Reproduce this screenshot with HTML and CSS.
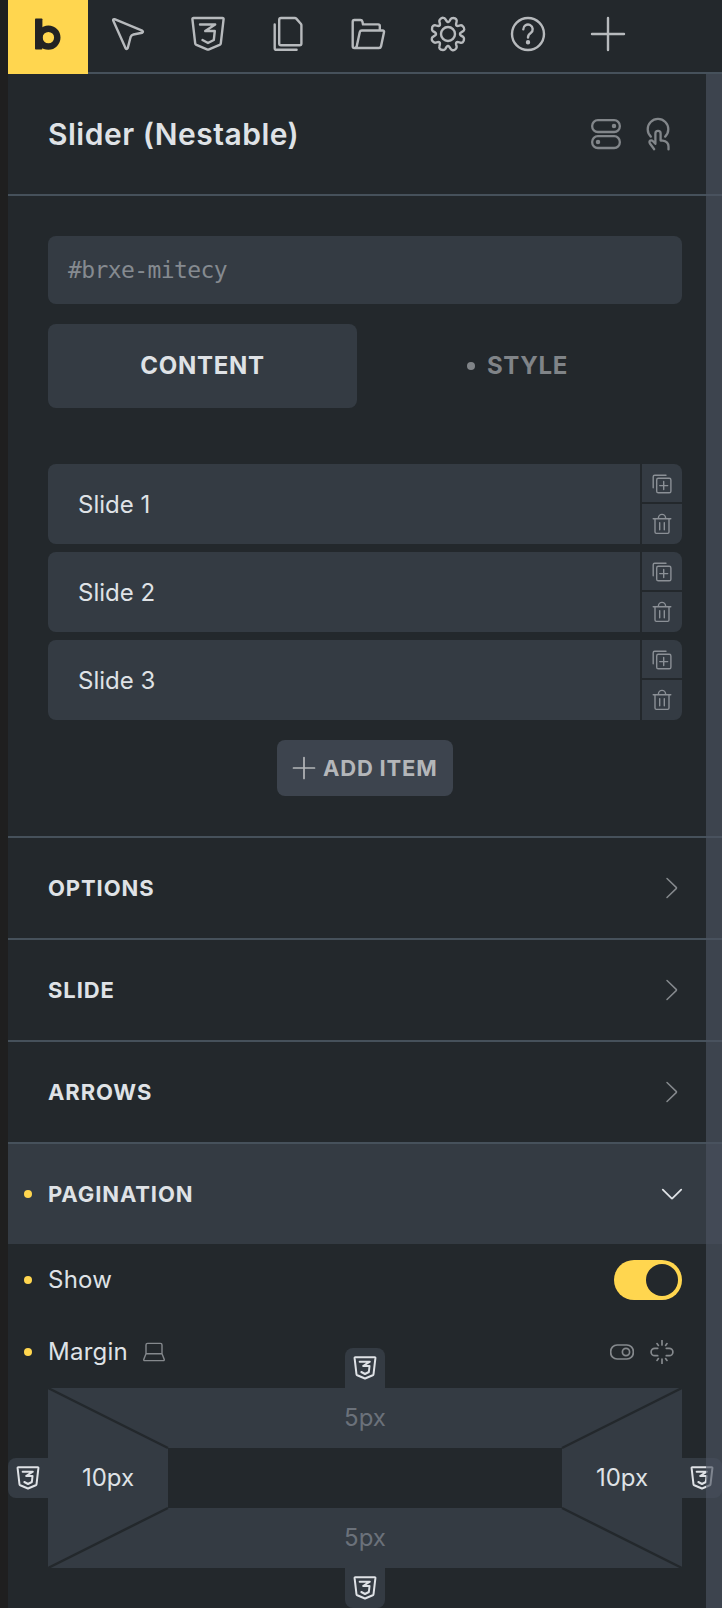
FILE: index.html
```
<!DOCTYPE html>
<html lang="en">
<head>
<meta charset="utf-8">
<title>Slider (Nestable)</title>
<link rel="stylesheet" href="styles.css">
</head>
<body>
<svg class="defs" aria-hidden="true">
  <symbol id="css" viewBox="-18 -18 36 36"><path d="M-15.6-14.8Q-15.7-16-14.5-16H14.5Q15.7-16 15.6-14.8L12.8 9.3Q12.7 10.4 11.6 10.9L1 15.4Q0 15.9-1 15.4L-11.6 10.9Q-12.7 10.4-12.8 9.3Z"/><path d="M-8-9.5H7.2L-2.8-3H6.8L5.8 6 0 9-5.5 6"/></symbol>
  <symbol id="copy" viewBox="-12 -12 24 24"><path d="M-8.8 4.7V-6.2Q-8.8-7.7-7.3-7.7H4"/><rect x="-5.3" y="-4.7" width="14.2" height="14.5" rx="1.6"/><path d="M1.7-1.5v8M-2.3 2.6h8"/></symbol>
  <symbol id="trash" viewBox="-12 -12 24 24"><path d="M-8.8-5.2H8.8M-3.6-5.2V-6A3.6 3.6 0 0 1 3.6-6V-5.2M-7-5V8Q-7 9.4-5.6 9.4H5.6Q7 9.4 7 8V-5M-2.3-1.4V5.8M2.3-1.4V5.8"/></symbol>
  <symbol id="next" viewBox="-12 -12 24 24"><path d="M-5-9.5 4.2-.6Q4.8 0 4.2.6L-5 9.5"/></symbol>
</svg>

<div class="builder">
  <nav class="toolbar">
    <a class="logo"><svg viewBox="0 0 80 74"><rect x="27" y="18.5" width="7.4" height="31" rx=".8"/><circle cx="40.4" cy="37.6" r="8.9"/></svg></a>
    <a class="tool"><svg viewBox="-18 -18 36 36"><path d="M-14.8-13.6Q-15.2-15.2-13.5-14.8L14.2-3.3Q15.7-2.2 14.2-1.2L5.4.5Q3.3 1 2.6 3L-.3 14.2Q-1.3 15.7-2.4 14.2Z"/></svg></a>
    <a class="tool"><svg><use href="#css"/></svg></a>
    <a class="tool"><svg viewBox="-18 -18 36 36"><path d="M-8.8-14.2Q-8.8-16-7-16H6.8Q7.7-16 8.3-15.4L12.8-10.3Q13.4-9.6 13.4-8.7V9.5Q13.4 11.3 11.6 11.3H-7Q-8.8 11.3-8.8 9.5ZM-13.3-9.5V14.2Q-13.3 15.8-11.7 15.8H8.6"/></svg></a>
    <a class="tool"><svg viewBox="-18 -18 36 36"><path d="M-11.7 14H-13.6Q-15.3 14-15.3 12.3V-12.2Q-15.3-14-13.6-14H-7.6Q-6-14-5.6-12.5L-5-9.6H10.2Q11.8-9.6 11.8-8V-3.5M-13 14Q-11.7 14-11.3 12.4L-8.2-2Q-7.8-3.5-6.2-3.5H14.6Q16.4-3.5 16-1.7L13 12.4Q12.6 14 11 14Z"/></svg></a>
    <a class="tool"><svg viewBox="-18 -18 36 36">
      <g id="gear-quarter"><path id="gear-tooth" d="M0-12Q1-12 1.6-13L2.6-14.8Q3.4-16 4.8-16Q7.3-16.1 8.2-14.8 9-13.7 8.6-12.3L8.1-10.3Q7.8-9.2 8.5-8.5"/><use href="#gear-tooth" transform="rotate(45)"/></g>
      <use href="#gear-quarter" transform="rotate(90)"/><use href="#gear-quarter" transform="rotate(180)"/><use href="#gear-quarter" transform="rotate(270)"/><circle r="7"/></svg></a>
    <a class="tool"><svg viewBox="-18 -18 36 36"><circle r="16"/><path d="M-4.7-4.6A4.7 4.7 0 1 1 2.7-.9Q0 .9 0 3.6"/><circle class="fill" cy="8.3" r="1"/></svg></a>
    <a class="tool"><svg viewBox="-18 -18 36 36"><path d="M0-16V16M-16 0H16"/></svg></a>
  </nav>

  <header class="panel-header">
    <h1>Slider (Nestable)</h1>
    <div class="header-actions">
      <svg viewBox="-18 -18 36 36"><rect x="-13.8" y="-13.8" width="27.6" height="11.8" rx="5.6"/><rect x="-13.8" y="2.2" width="27.6" height="11.8" rx="5.6"/><circle class="fill" cx="8" cy="-8" r="1.1"/><circle class="fill" cx="-8" cy="8" r="1.1"/></svg>
      <svg viewBox="-18 -18 36 36"><path d="M-7.2 2.6A10.3 10.3 0 1 1 7.2 2.6"/><path d="M-3.8 15.2-7.9 9.8Q-9.3 7.6-7.7 6.6-6.4 5.8-5 7.3L-2.6 9.8V-.6A2.6 2.6 0 0 1 2.6-.6V6.6H4.6Q10.4 7.3 10.5 12.5V15.4"/></svg>
    </div>
  </header>

  <section class="element">
    <div class="element-id">#brxe-mitecy</div>
    <div class="tabs">
      <div class="tab active">CONTENT</div>
      <div class="tab"><span class="changed">STYLE</span></div>
    </div>
    <ul class="slides">
      <li><span class="name">Slide 1</span><div class="tools"><svg><use href="#copy"/></svg><svg><use href="#trash"/></svg></div></li>
      <li><span class="name">Slide 2</span><div class="tools"><svg><use href="#copy"/></svg><svg><use href="#trash"/></svg></div></li>
      <li><span class="name">Slide 3</span><div class="tools"><svg><use href="#copy"/></svg><svg><use href="#trash"/></svg></div></li>
    </ul>
    <button class="add"><svg viewBox="-12 -12 24 24"><path d="M0-10.5V10.5M-10.5 0H10.5"/></svg>ADD ITEM</button>
  </section>

  <div class="group">OPTIONS<svg><use href="#next"/></svg></div>
  <div class="group">SLIDE<svg><use href="#next"/></svg></div>
  <div class="group">ARROWS<svg><use href="#next"/></svg></div>
  <div class="group open marked">PAGINATION<svg viewBox="-12 -12 24 24"><path d="M-9.2-4.3-.6 4.2Q0 4.8.6 4.2L9.2-4.3"/></svg></div>

  <div class="control show marked">Show<span class="switch"></span></div>
  <div class="control margin marked">Margin
    <svg class="device" viewBox="-12 -12 24 24"><path d="M-8 1.8V-7Q-8-8.6-6.4-8.6H6.4Q8-8.6 8-7V1.8ZM-8 1.8-10.2 7.2Q-10.6 8.6-9.2 8.6H9.2Q10.6 8.6 10.2 7.2L8 1.8"/></svg>
    <div class="margin-actions">
      <svg viewBox="-12 -12 24 24"><rect x="-11.3" y="-7" width="22.6" height="14" rx="6.4"/><circle cx="4" r="3.6"/></svg>
      <svg viewBox="-12 -12 24 24"><path d="M-4.3-3.7H-7.2A3.7 3.7 0 0 0-7.2 3.7H-4.3M4.3-3.7H7.2A3.7 3.7 0 0 1 7.2 3.7H4.3M0-11.4V-7M0 11.4V7M-5-8.4-3.6-6.6M5-8.4 3.6-6.6M-5 8.4-3.6 6.6M5 8.4 3.6 6.6"/></svg>
    </div>
  </div>

  <div class="spacing">
    <svg class="seams" viewBox="0 0 634 180"><path d="M0 0 120 60M634 0 514 60M0 180 120 120M634 180 514 120"/></svg>
    <span class="value top">5px</span>
    <span class="value left">10px</span>
    <span class="hole"></span>
    <span class="value right">10px</span>
    <span class="value bottom">5px</span>
    <span class="var var-top"><svg><use href="#css"/></svg></span>
    <span class="var var-left"><svg><use href="#css"/></svg></span>
    <span class="var var-right"><svg><use href="#css"/></svg></span>
    <span class="var var-bottom"><svg><use href="#css"/></svg></span>
  </div>
  <div class="scrollbar"></div>
</div>
</body>
</html>
```
FILE: styles.css
```
* { box-sizing: border-box; }

body {
  margin: 0;
  background: #1f1f1f;
  color: #dfe2e6;
  font: 24px/1 Inter, sans-serif;
}

svg {
  fill: none;
  stroke: currentColor;
  stroke-width: 2;
  stroke-linecap: round;
  stroke-linejoin: round;
  flex: none;
}
svg .fill { fill: currentColor; }
.defs { display: none; }

.builder {
  position: relative;
  height: 1608px;
  margin-left: 8px;
  background: #23282c;
  overflow: hidden;
}

/* Top toolbar */
.toolbar {
  display: flex;
  height: 74px;
  border-bottom: 2px solid #46515b;
}
.logo { width: 80px; height: 74px; background: #ffd64f; color: #232323; }
.logo svg { width: 80px; height: 74px; display: block; }
.logo rect { fill: currentColor; stroke: none; }
.logo circle { stroke-width: 6.4; }
.tool {
  width: 80px;
  height: 68px;
  display: flex;
  align-items: center;
  justify-content: center;
  color: #b7babd;
}
.tool svg { width: 36px; height: 36px; stroke-width: 2.4; }

/* Panel heading */
.panel-header {
  display: flex;
  align-items: center;
  justify-content: space-between;
  height: 122px;
  padding: 0 46px 0 40px;
  border-bottom: 2px solid #46515b;
}
h1 { margin: 0; font-size: 30px; font-weight: 600; letter-spacing: .5px; }
.header-actions { display: flex; gap: 16px; color: #82868a; }
.header-actions svg { width: 36px; height: 36px; stroke-width: 2.3; }

/* Element settings */
.element {
  display: flex;
  flex-direction: column;
  height: 642px;
  padding: 40px 40px 0;
  border-bottom: 2px solid #46515b;
}
.element-id {
  height: 68px;
  padding: 0 20px;
  border-radius: 8px;
  background: #343b43;
  color: #858a90;
  font: 23px/69px "DejaVu Sans Mono", monospace;
  letter-spacing: -.6px;
}
.tabs { display: flex; gap: 16px; margin-top: 20px; }
.tab {
  flex: 1;
  height: 84px;
  border-radius: 8px;
  font-weight: 700;
  line-height: 84px;
  text-align: center;
  letter-spacing: .7px;
  color: #808488;
}
.tab.active { background: #343b43; color: #dfe2e6; }
.changed { position: relative; }
.changed::before {
  content: "";
  position: absolute;
  left: -20px;
  top: 11px;
  width: 8px;
  height: 8px;
  border-radius: 50%;
  background: currentColor;
}
.slides {
  display: grid;
  gap: 8px;
  margin: 56px 0 20px;
  padding: 0;
  list-style: none;
}
.slides li { display: flex; gap: 2px; height: 80px; border-radius: 8px; overflow: hidden; }
.name { flex: 1; padding-left: 30px; line-height: 82px; background: #343b43; }
.tools { display: grid; grid-template-rows: 38px 40px; gap: 2px; width: 40px; color: #8b9096; }
.tools svg { width: 40px; height: 100%; padding: 7px 8px; background: #343b43; stroke-width: 1.4; }
.add {
  display: flex;
  align-items: center;
  align-self: center;
  gap: 7px;
  height: 56px;
  width: 176px;
  padding: 0 0 0 15px;
  border: 0;
  border-radius: 8px;
  background: #3d444e;
  color: #b4b6b9;
  font: 700 22px/1 Inter, sans-serif;
  letter-spacing: .8px;
  white-space: nowrap;
}
.add svg { width: 24px; height: 24px; stroke-width: 1.7; }

/* Control groups */
.group {
  display: flex;
  align-items: center;
  justify-content: space-between;
  height: 102px;
  padding: 0 38px 0 40px;
  border-bottom: 2px solid #46515b;
  font-size: 22px;
  font-weight: 700;
  letter-spacing: .9px;
}
.group svg { width: 24px; height: 24px; color: #85898d; stroke-width: 1.5; }
.group.open { height: 100px; border: 0; background: #343b43; }
.group.open svg { color: #dfe2e6; stroke-width: 1.8; }
.marked { position: relative; }
.marked::before {
  content: "";
  position: absolute;
  left: 16px;
  top: calc(50% - 4px);
  width: 8px;
  height: 8px;
  border-radius: 50%;
  background: #ffd64f;
}
.control { display: flex; align-items: center; height: 72px; padding: 0 40px; letter-spacing: .25px; }
.switch {
  display: flex;
  justify-content: flex-end;
  width: 68px;
  height: 40px;
  margin-left: auto;
  padding: 4px;
  border-radius: 20px;
  background: #ffd64f;
}
.switch::after { content: ""; width: 32px; height: 32px; border-radius: 50%; background: #23282c; }
.device { width: 24px; height: 24px; margin-left: 14px; color: #85898d; stroke-width: 1.4; }
.margin-actions { display: flex; gap: 16px; margin: 0 8px 0 auto; color: #85898d; }
.margin-actions svg { width: 24px; height: 24px; stroke-width: 1.7; }

/* Four-sided spacing editor */
.spacing {
  position: relative;
  display: grid;
  grid-template: 60px 60px 60px / 120px 1fr 120px;
  width: 634px;
  margin-left: 40px;
  background: #343b43;
}
.seams { position: absolute; inset: 0; width: 634px; height: 180px; color: #23282c; stroke-width: 2.4; stroke-linecap: butt; }
.hole { background: #23282c; }
.value { position: relative; display: flex; align-items: center; justify-content: center; }
.top, .bottom { grid-column: 1 / 4; color: #6b717a; }
.var {
  position: absolute;
  display: flex;
  align-items: center;
  justify-content: center;
  width: 40px;
  height: 40px;
  background: #343b43;
}
.var svg { width: 24px; height: 24px; stroke-width: 3; }
.var-top { top: -40px; left: 297px; border-radius: 8px 8px 0 0; }
.var-bottom { bottom: -40px; left: 297px; border-radius: 0 0 8px 8px; }
.var-left { top: 70px; left: -40px; border-radius: 8px 0 0 8px; }
.var-right { top: 70px; right: -40px; border-radius: 0 8px 8px 0; }

.scrollbar {
  position: absolute;
  top: 74px;
  right: 0;
  bottom: 0;
  width: 16px;
  background: rgba(75, 83, 97, .65);
}
```
